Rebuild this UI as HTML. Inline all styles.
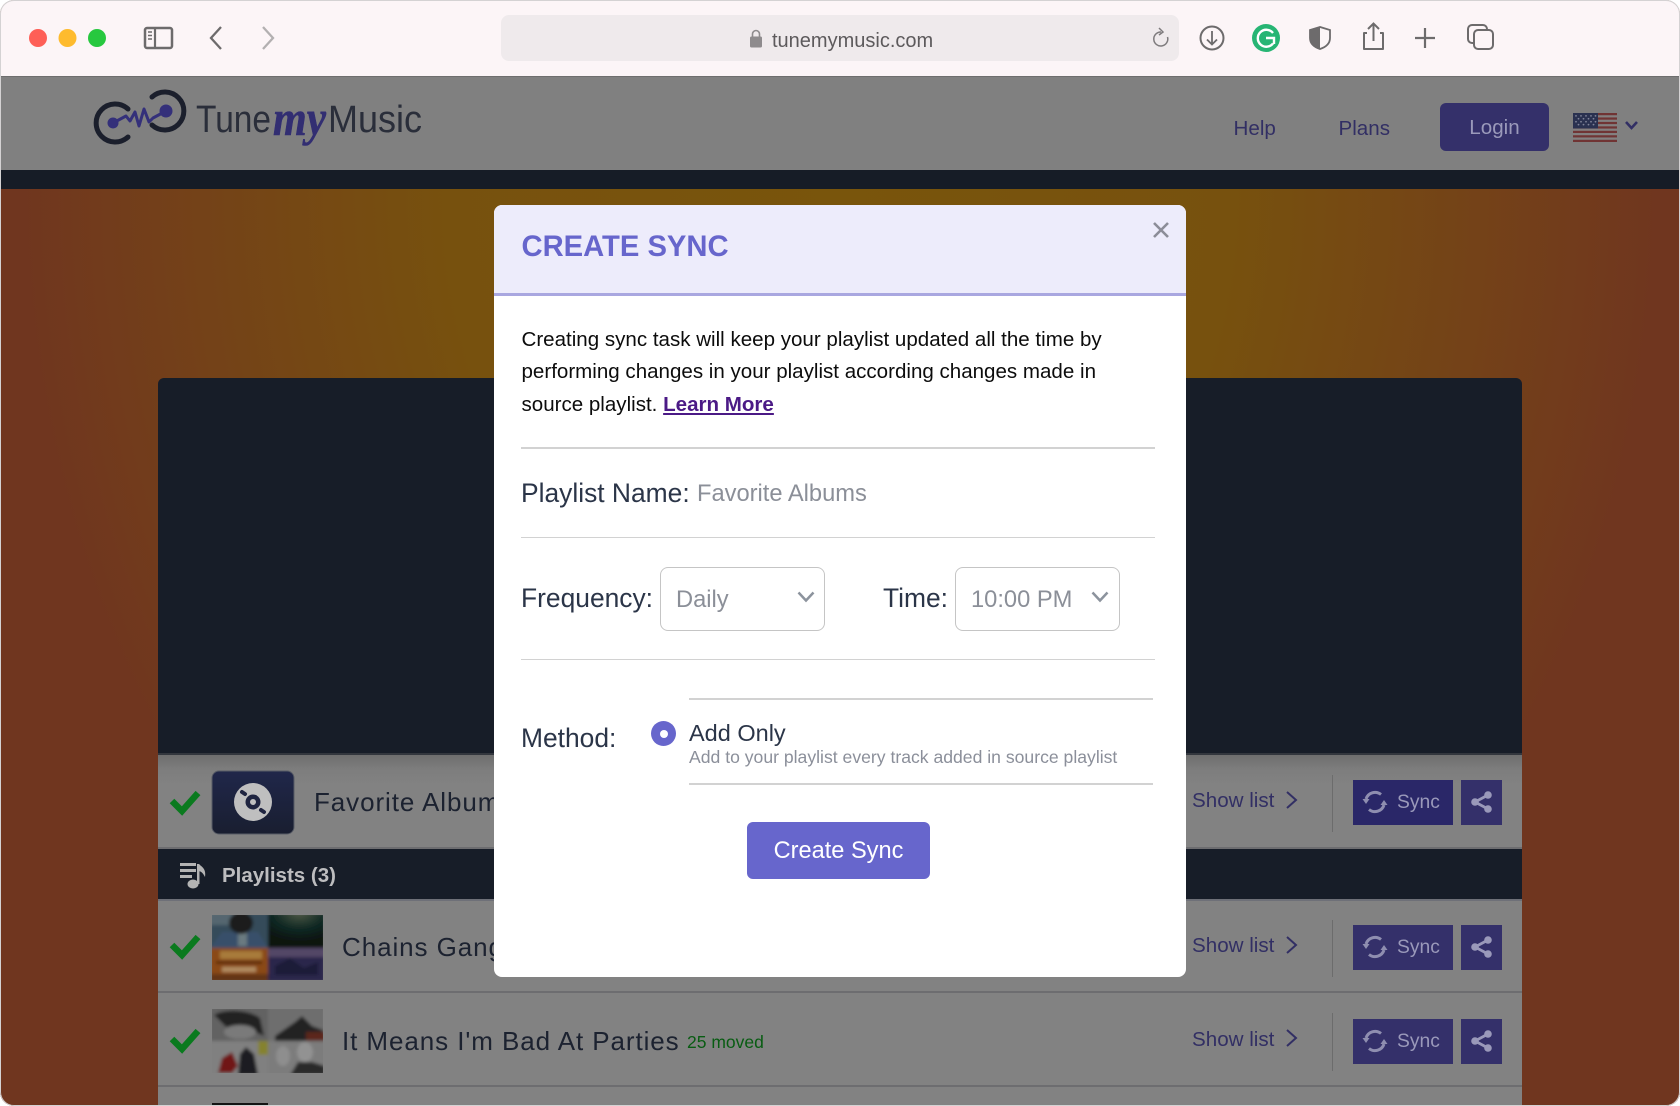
<!DOCTYPE html>
<html lang="en">
<head>
<meta charset="utf-8">
<title>TuneMyMusic - Create Sync</title>
<style>
*{box-sizing:border-box;margin:0;padding:0}
html,body{width:1680px;height:1106px;background:#fff;overflow:hidden;font-family:"Liberation Sans",Arial,sans-serif}
.win{position:absolute;left:0;top:0;width:1680px;height:1106px;border-radius:14px;overflow:hidden;background:#70361f}
.frame{position:absolute;left:0;top:0;width:1680px;height:1106px;border-radius:14px;border:1px solid #d4d2d3;pointer-events:none}
.abs,.t{position:absolute}
.t{white-space:nowrap}
svg{position:absolute;overflow:visible;left:0;top:0}
.toolbar{left:0;top:0;width:1680px;height:77px;background:#fcf5f7;border-bottom:1px solid #6e6e6e}
.url{left:501px;top:15px;width:678px;height:46px;background:#efeaec;border-radius:8px}
.head{left:0;top:76px;width:1680px;height:94px;background:#808080}
.bar{left:0;top:170px;width:1680px;height:19px;background:#161c26}
.bg{left:0;top:189px;width:1680px;height:917px;background:radial-gradient(ellipse 820px 1000px at 50% 0,#79550c 0,#77510e 48%,#744218 78%,#70361f 100%)}
.panel{left:158px;top:378px;width:1364px;height:728px;background:#171d28;border-radius:6px 6px 0 0}
.row{left:158px;width:1364px;height:94px;background:#828282;border-bottom:2px solid #6d6d70}
.pl{left:158px;top:849px;width:1364px;height:50px;background:#171d28}
.name{font-size:26px;letter-spacing:.92px;color:#1c2230}
.show{font-size:20.6px;color:#322f64;line-height:26px}
.div{width:1px;background:#6c6c6c}
.sync{left:1353px;width:100px;height:45px;background:#34306a}
.share{left:1461px;width:41px;height:45px;background:#34306a}
.sync span{position:absolute;left:44px;top:0;line-height:45px;font-size:19.3px;color:#9a99ba}
.modal{left:494px;top:205px;width:692px;height:772px;background:#fff;border-radius:8px;overflow:hidden}
.mh{left:0;top:0;width:694px;height:91px;background:#edecfb;border-bottom:3px solid #a9a7e0}
.hr{height:1px;background:#d2d2d2}
.lab{font-size:26.4px;color:#2b3548;line-height:32px}
.ph{font-size:23.7px;color:#8b8f98;line-height:30px}
.sel{width:165px;height:64px;border:1.5px solid #c5c5c5;border-radius:8px;background:#fff}
</style>
</head>
<body>
<div class="win">

<div class="abs bg"></div>
<div class="abs panel"></div>

<div class="abs head"></div>
<div class="abs bar"></div>

<!-- Logo -->
<svg width="1680" height="1106" viewBox="0 0 1680 1106">
  <g fill="none" stroke="#1b1f2c" stroke-width="5" stroke-linecap="round">
    <path d="M128 109A19 19 0 1 0 128 137"/>
    <path d="M152 97A19 19 0 1 1 152 125"/>
  </g>
  <path d="M113 123L126 116L130 121L135 112L139 126L144 109L149 122L153 118L166 111" fill="none" stroke="#34307a" stroke-width="3" stroke-linejoin="round"/>
  <circle cx="113" cy="123" r="5.500" fill="#34307a"/>
  <circle cx="166" cy="111" r="6.500" fill="#34307a"/>
  <text x="196" y="132" font-family="Liberation Sans" font-size="38" fill="#2a2e3a" textLength="75" lengthAdjust="spacingAndGlyphs">Tune</text>
  <text x="273" y="135" font-family="Liberation Serif" font-weight="bold" font-style="italic" font-size="50" fill="#322e72" stroke="#322e72" stroke-width=".6" textLength="53" lengthAdjust="spacingAndGlyphs">my</text>
  <text x="328" y="132" font-family="Liberation Sans" font-size="38" fill="#2a2e3a" textLength="94" lengthAdjust="spacingAndGlyphs">Music</text>
</svg>

<!-- Nav -->
<div class="t" style="left:1233.500px;top:116px;font-size:20.6px;line-height:26px;color:#322f64">Help</div>
<div class="t" style="left:1338.500px;top:116px;font-size:20.6px;line-height:26px;color:#322f64">Plans</div>
<div class="abs" style="left:1440px;top:103px;width:109px;height:48px;background:#34306a;border-radius:6px"></div>
<div class="t" style="left:1440px;top:115px;width:109px;text-align:center;font-size:20.6px;line-height:26px;color:#9a99ba">Login</div>
<svg style="left:1573px;top:113px" width="44" height="29" viewBox="0 0 44 30" preserveAspectRatio="none">
  <rect width="44" height="30" fill="#838080"/>
  <g fill="#703434">
    <rect y="0" width="44" height="2.300"/><rect y="4.600" width="44" height="2.300"/><rect y="9.200" width="44" height="2.300"/><rect y="13.800" width="44" height="2.300"/><rect y="18.400" width="44" height="2.300"/><rect y="23" width="44" height="2.300"/><rect y="27.700" width="44" height="2.300"/>
  </g>
  <rect width="25" height="16" fill="#2a3150"/>
  <g fill="#7f8398">
    <circle cx="3" cy="3" r=".9"/><circle cx="8" cy="3" r=".9"/><circle cx="13" cy="3" r=".9"/><circle cx="18" cy="3" r=".9"/><circle cx="22.500" cy="3" r=".9"/>
    <circle cx="5.500" cy="6" r=".9"/><circle cx="10.500" cy="6" r=".9"/><circle cx="15.500" cy="6" r=".9"/><circle cx="20.500" cy="6" r=".9"/>
    <circle cx="3" cy="9" r=".9"/><circle cx="8" cy="9" r=".9"/><circle cx="13" cy="9" r=".9"/><circle cx="18" cy="9" r=".9"/><circle cx="22.500" cy="9" r=".9"/>
    <circle cx="5.500" cy="12" r=".9"/><circle cx="10.500" cy="12" r=".9"/><circle cx="15.500" cy="12" r=".9"/><circle cx="20.500" cy="12" r=".9"/>
  </g>
</svg>
<svg style="left:1624px;top:120px" width="15" height="11" viewBox="0 0 15 11"><path d="M2 2L7.500 8L13 2" fill="none" stroke="#322f64" stroke-width="2.600"/></svg>

<!-- Rows -->
<div class="abs row" style="top:755px;background:linear-gradient(#6e6e6e 0,#7d7d7d 14px,#828282 30px)"></div>
<div class="abs" style="left:158px;top:753px;width:1364px;height:2px;background:#33373e"></div>
<div class="abs pl"></div>
<div class="abs row" style="top:899px;border-top:2px solid #6e7078"></div>
<div class="abs row" style="top:993px"></div>
<div class="abs row" style="top:1087px;border-bottom:0;height:19px"></div>

<!-- Checks, disc, playlist icon, thumbs -->
<svg width="1680" height="1106" viewBox="0 0 1680 1106">
  <defs>
    <linearGradient id="dg" x1="0" y1="0" x2="0" y2="1"><stop offset="0" stop-color="#20274a"/><stop offset="1" stop-color="#191e30"/></linearGradient>
    <filter id="bl" x="-5%" y="-5%" width="110%" height="110%"><feGaussianBlur stdDeviation="1.500"/></filter>
    <clipPath id="c2"><rect x="212" y="915" width="111" height="65"/></clipPath>
    <clipPath id="c3"><rect x="212" y="1009" width="111" height="64"/></clipPath>
    <radialGradient id="tr2" cx=".55" cy="0" r=".8"><stop offset="0" stop-color="#4e5844"/><stop offset=".55" stop-color="#122a25"/><stop offset="1" stop-color="#071411"/></radialGradient>
  </defs>
  <g fill="none" stroke="#0a7a1e" stroke-width="6.500">
    <path d="M172 801L182 811L198 793"/>
    <path d="M172 945L182 955L198 937"/>
    <path d="M172 1039L182 1049L198 1031"/>
  </g>
  <rect x="212" y="771" width="82" height="63" rx="7" fill="url(#dg)" stroke="#585c66"/>
  <circle cx="253" cy="802" r="19" fill="#bfbfbf"/>
  <circle cx="253" cy="802" r="7.500" fill="#1f2440"/>
  <circle cx="253" cy="802" r="3" fill="#bfbfbf"/>
  <path d="M242 792L245 794M264 812L261 810" stroke="#1f2440" stroke-width="4" stroke-linecap="round"/>
  <g fill="#b4b4b4">
    <rect x="180" y="863" width="16" height="3"/><rect x="180" y="869" width="16" height="3"/><rect x="180" y="875" width="12" height="3"/>
    <ellipse cx="193" cy="884" rx="5.500" ry="4.500"/>
    <rect x="197" y="864" width="2.500" height="20"/>
  </g>
  <path d="M198 864C204 867 206 871 205 877C203 873 201 871 198 871Z" fill="#b4b4b4"/>

  <g clip-path="url(#c2)"><g filter="url(#bl)">
    <rect x="210" y="913" width="58" height="35" fill="#354c5a"/>
    <rect x="210" y="913" width="30" height="12" fill="#546670"/>
    <path d="M210 948L222 932L258 932L268 948Z" fill="#38506a"/>
    <rect x="238" y="930" width="9" height="16" fill="#6a7a80"/>
    <ellipse cx="241" cy="923" rx="12" ry="11" fill="#1a1a1a"/>
    <rect x="268" y="913" width="57" height="35" fill="url(#tr2)"/>
    <rect x="210" y="948" width="58" height="34" fill="#8a4a18"/>
    <rect x="220" y="951" width="42" height="8" fill="#a87c3a"/>
    <rect x="216" y="961" width="46" height="3" fill="#5a2c10"/>
    <rect x="222" y="967" width="34" height="5" fill="#b08c60"/>
    <rect x="210" y="974" width="58" height="8" fill="#643612"/>
    <rect x="268" y="948" width="57" height="34" fill="#2a264c"/>
    <rect x="268" y="948" width="57" height="9" fill="#524666"/>
    <path d="M275 966L290 958L304 968L318 962V975H275Z" fill="#1b1a38"/>
  </g></g>

  <g clip-path="url(#c3)"><g filter="url(#bl)">
    <rect x="210" y="1007" width="58" height="34" fill="#626262"/>
    <path d="M214 1015C225 1008 250 1010 260 1018L264 1036L246 1028L226 1027Z" fill="#242424"/>
    <ellipse cx="240" cy="1032" rx="16" ry="7" fill="#7a7a7a"/>
    <rect x="268" y="1007" width="57" height="34" fill="#6e6e6e"/>
    <path d="M275 1036L295 1022L302 1016L312 1026L323 1030V1041H275Z" fill="#222"/>
    <rect x="306" y="1032" width="19" height="9" fill="#5c261e"/>
    <rect x="210" y="1041" width="58" height="34" fill="#808080"/>
    <rect x="258" y="1041" width="10" height="14" fill="#85822f"/>
    <path d="M218 1073L222 1058L232 1052L238 1066L232 1073Z" fill="#701616"/>
    <path d="M238 1075L240 1054L246 1047L254 1054L258 1075Z" fill="#1e1f20"/>
    <rect x="268" y="1041" width="57" height="34" fill="#7c7c7c"/>
    <ellipse cx="283" cy="1056" rx="7" ry="10" fill="#8e8e8e"/>
    <ellipse cx="305" cy="1052" rx="8" ry="10" fill="#929292"/>
    <path d="M290 1075L298 1062L312 1062L325 1066V1075Z" fill="#2a2a2a"/>
  </g></g>
</svg>

<div class="t name" style="left:314px;top:786px;line-height:32px">Favorite Albums</div>
<div class="t" style="left:222px;top:863px;font-size:20.500px;font-weight:bold;line-height:26px;color:#bdbdbf">Playlists (3)</div>
<div class="t name" style="left:342px;top:931px;line-height:32px">Chains Gang</div>
<div class="t name" style="left:342px;top:1024.500px;line-height:32px">It Means I'm Bad At Parties</div>
<div class="t" style="left:687px;top:1031px;font-size:17.500px;line-height:22px;color:#085c12">25 moved</div>

<div class="abs" style="left:212px;top:1103px;width:56px;height:3px;background:#141414"></div>

<!-- Show list -->
<div class="t show" style="left:1192px;top:787.500px">Show list</div>
<div class="t show" style="left:1192px;top:932.500px">Show list</div>
<div class="t show" style="left:1192px;top:1026.500px">Show list</div>
<svg width="1680" height="1106" viewBox="0 0 1680 1106">
  <g fill="none" stroke="#322f64" stroke-width="2">
    <path d="M1287 792L1296 800L1287 808"/>
    <path d="M1287 937L1296 945L1287 953"/>
    <path d="M1287 1030L1296 1038L1287 1046"/>
  </g>
</svg>
<div class="abs div" style="left:1332px;top:775px;height:57px"></div>
<div class="abs div" style="left:1332px;top:920px;height:57px"></div>
<div class="abs div" style="left:1332px;top:1013px;height:58px"></div>

<!-- Sync buttons -->
<div class="abs sync" style="top:780px;background:#2a2768"><span>Sync</span></div>
<div class="abs share" style="top:780px"></div>
<div class="abs sync" style="top:925px"><span>Sync</span></div>
<div class="abs share" style="top:925px"></div>
<div class="abs sync" style="top:1019px"><span>Sync</span></div>
<div class="abs share" style="top:1019px"></div>
<svg width="1680" height="1106" viewBox="0 0 1680 1106">
  <defs>
    <g id="sy">
      <path d="M-9 -3A9.500 9.500 0 0 1 6 -7.500" fill="none" stroke="#8f8eb0" stroke-width="3"/>
      <path d="M-12.500 -3L-5.500 -3L-9 2Z" fill="#8f8eb0"/>
      <path d="M9 3A9.500 9.500 0 0 1 -6 7.500" fill="none" stroke="#8f8eb0" stroke-width="3"/>
      <path d="M12.500 3L5.500 3L9 -2Z" fill="#8f8eb0"/>
    </g>
    <g id="sh">
      <path d="M7 -7L-6 0L7 7" fill="none" stroke="#9a99ba" stroke-width="2.800"/>
      <circle cx="7" cy="-7" r="3.800" fill="#9a99ba"/><circle cx="-6" cy="0" r="3.800" fill="#9a99ba"/><circle cx="7" cy="7" r="3.800" fill="#9a99ba"/>
    </g>
  </defs>
  <use href="#sy" x="1375" y="802"/><use href="#sh" x="1481" y="802"/>
  <use href="#sy" x="1375" y="947"/><use href="#sh" x="1481" y="947"/>
  <use href="#sy" x="1375" y="1041"/><use href="#sh" x="1481" y="1041"/>
</svg>

<!-- Modal -->
<div class="abs modal">
<div class="abs" style="left:-1px;top:0;width:694px;height:772px">
  <div class="abs mh"></div>
  <div class="t" style="left:28.500px;top:24px;font-size:29.200px;font-weight:bold;line-height:36px;color:#6766cc">CREATE SYNC</div>
  <svg style="left:660px;top:17px" width="16" height="16" viewBox="0 0 16 16"><path d="M1 1L15 15M15 1L1 15" stroke="#8c8d98" stroke-width="2.600"/></svg>
  <div class="t" style="left:28.500px;top:119px;font-size:20.550px;line-height:32.400px;color:#0c0c0c">Creating sync task will keep your playlist updated all the time by<br>performing changes in your playlist according changes made in<br>source playlist. <a style="color:#4b1a86;font-weight:bold;text-decoration:underline">Learn More</a></div>
  <div class="abs hr" style="left:28px;top:242px;width:634px;height:1.500px"></div>
  <div class="t lab" style="left:28px;top:271.500px">Playlist Name:</div>
  <div class="t ph" style="left:204px;top:274px">Favorite Albums</div>
  <div class="abs hr" style="left:28px;top:332px;width:634px"></div>
  <div class="t lab" style="left:28px;top:377px">Frequency:</div>
  <div class="abs sel" style="left:167px;top:362px"></div>
  <div class="t ph" style="left:183px;top:380px">Daily</div>
  <svg style="left:304px;top:386px" width="18" height="12" viewBox="0 0 18 12"><path d="M1.500 1.500L9 9.500L16.500 1.500" fill="none" stroke="#8c939d" stroke-width="2.500"/></svg>
  <div class="t lab" style="left:390px;top:377px">Time:</div>
  <div class="abs sel" style="left:462px;top:362px"></div>
  <div class="t ph" style="left:478px;top:380px">10:00 PM</div>
  <svg style="left:598px;top:386px" width="18" height="12" viewBox="0 0 18 12"><path d="M1.500 1.500L9 9.500L16.500 1.500" fill="none" stroke="#8c939d" stroke-width="2.500"/></svg>
  <div class="abs hr" style="left:28px;top:454px;width:634px"></div>
  <div class="abs hr" style="left:196px;top:493px;width:464px;height:2px"></div>
  <div class="t lab" style="left:28px;top:517px">Method:</div>
  <div class="abs" style="left:158px;top:516px;width:25px;height:25px;border-radius:50%;background:#6766cc"></div>
  <div class="abs" style="left:166.500px;top:524.500px;width:8px;height:8px;border-radius:50%;background:#fff"></div>
  <div class="t" style="left:196px;top:513px;font-size:23.500px;line-height:30px;color:#2b3548">Add Only</div>
  <div class="t" style="left:196px;top:541px;font-size:17.600px;line-height:22px;color:#8b8f9a">Add to your playlist every track added in source playlist</div>
  <div class="abs hr" style="left:196px;top:578px;width:464px;height:2px"></div>
  <div class="abs" style="left:254px;top:617px;width:183px;height:57px;border-radius:6px;background:#6766cc"></div>
  <div class="t" style="left:254px;top:631px;width:183px;text-align:center;font-size:23.600px;line-height:30px;color:#fff">Create Sync</div>
</div>
</div>

<!-- Toolbar -->
<div class="abs toolbar"></div>
<div class="abs url"></div>
<div class="t" style="left:772px;top:27.500px;font-size:20px;line-height:26px;color:#5d5a5c">tunemymusic.com</div>
<svg width="1680" height="1106" viewBox="0 0 1680 1106">
  <circle cx="38" cy="38" r="9" fill="#fe5f57"/>
  <circle cx="67.500" cy="38" r="9" fill="#febb2e"/>
  <circle cx="97" cy="38" r="9" fill="#27c83f"/>
  <rect x="145" y="28" width="27" height="20" rx="2" fill="none" stroke="#6d6b6c" stroke-width="2.500"/>
  <path d="M155 28V48" stroke="#6d6b6c" stroke-width="2.200"/>
  <path d="M148 32H152M148 35.500H152M148 39H152" stroke="#6d6b6c" stroke-width="1.500"/>
  <path d="M221 27L211 38L221 49" fill="none" stroke="#6d6b6c" stroke-width="2.300"/>
  <path d="M263 27L273 38L263 49" fill="none" stroke="#b3b0b1" stroke-width="2.300"/>
  <g transform="translate(0 1.500)">
    <rect x="750" y="35" width="12" height="11" rx="1.500" fill="#8e8b8d"/>
    <path d="M752.500 35V32.500A3.500 3.500 0 0 1 759.500 32.500V35" fill="none" stroke="#8e8b8d" stroke-width="1.600"/>
  </g>
  <path d="M1161 32A7 7 0 1 0 1167.500 37" fill="none" stroke="#7e7b7d" stroke-width="1.500"/>
  <path d="M1159 28L1163 32L1159 35" fill="none" stroke="#7e7b7d" stroke-width="1.500"/>
  <circle cx="1212" cy="38" r="11.500" fill="none" stroke="#6d6b6c" stroke-width="2"/>
  <path d="M1212 31V44M1207 39.500L1212 44.500L1217 39.500" fill="none" stroke="#6d6b6c" stroke-width="1.800"/>
  <circle cx="1266" cy="38" r="14" fill="#27b574"/>
  <path d="M1273 33A8.500 8.500 0 1 0 1273 43.500" fill="none" stroke="#fff" stroke-width="2.400"/>
  <path d="M1266 38H1274V44" fill="none" stroke="#fff" stroke-width="2.400"/>
  <path d="M1320 27L1310 30V38C1310 44 1314 47 1320 49C1326 47 1330 44 1330 38V30Z" fill="#fcf5f7" stroke="#6d6b6c" stroke-width="1.800"/>
  <path d="M1320 27L1310 30V38C1310 44 1314 47 1320 49Z" fill="#6d6b6c"/>
  <path d="M1367 33H1364V49H1383V33H1380" fill="none" stroke="#6d6b6c" stroke-width="2" stroke-linejoin="round"/>
  <path d="M1373.500 41V24M1368 29L1373.500 23.500L1379 29" fill="none" stroke="#6d6b6c" stroke-width="2"/>
  <path d="M1425 28V48M1415 38H1435" stroke="#6d6b6c" stroke-width="2.200"/>
  <rect x="1474" y="30" width="19" height="19" rx="4" fill="none" stroke="#6d6b6c" stroke-width="2"/>
  <path d="M1474 43H1472A4 4 0 0 1 1468 39V29A4 4 0 0 1 1472 25H1483A4 4 0 0 1 1487 29V30" fill="none" stroke="#6d6b6c" stroke-width="2"/>
</svg>

</div>
<div class="frame"></div>
</body>
</html>
